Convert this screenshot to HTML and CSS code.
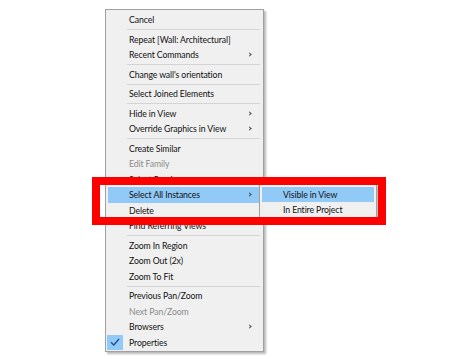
FILE: index.html
```html
<!DOCTYPE html>
<html lang="en">
<head>
  <meta charset="UTF-8">
  <title>Context menu</title>
  <link rel="stylesheet" href="styles.css">
</head>
<body>
  <div class="stage">
    <ul class="menu">
      <li class="item">Cancel</li>
      <li class="sep"></li>
      <li class="item">Repeat [Wall: Architectural]</li>
      <li class="item more">Recent Commands</li>
      <li class="sep"></li>
      <li class="item">Change wall's orientation</li>
      <li class="sep"></li>
      <li class="item">Select Joined Elements</li>
      <li class="sep"></li>
      <li class="item more">Hide in View</li>
      <li class="item more">Override Graphics in View</li>
      <li class="sep"></li>
      <li class="item">Create Similar</li>
      <li class="item off">Edit Family</li>
      <li class="item">Select Previous</li>
      <li class="item more hot">Select All Instances</li>
      <li class="item">Delete</li>
      <li class="item">Find Referring Views</li>
      <li class="sep"></li>
      <li class="item">Zoom In Region</li>
      <li class="item">Zoom Out (2x)</li>
      <li class="item">Zoom To Fit</li>
      <li class="sep"></li>
      <li class="item">Previous Pan/Zoom</li>
      <li class="item off">Next Pan/Zoom</li>
      <li class="item more">Browsers</li>
      <li class="item checked">
        <span class="check">
          <svg width="10" height="8" viewBox="0 0 10 8"><path d="M1 4.2 L3.8 7 L9 1" fill="none" stroke="#1f4f8f" stroke-width="1.3"/></svg>
        </span>
        Properties
      </li>
    </ul>

    <ul class="submenu">
      <li class="item hot">Visible in View</li>
      <li class="item">In Entire Project</li>
    </ul>

    <div class="callout"></div>
  </div>
</body>
</html>
```

FILE: styles.css
```css
*,*::before,*::after{
  margin: 0;
  padding: 0;
  box-sizing: border-box;
}
body{
  width: 474px;
  height: 359px;
  overflow: hidden;
  background: #fff;
  font-family: Lato, "Open Sans", sans-serif;
  font-size: 8.7px;
  letter-spacing: -0.1px;
  color: #111;
}
.stage{
  position: relative;
  width: 100%;
  height: 100%;
  padding: 9px 0 0 105px;
}
ul{
  list-style: none;
}

.menu{
  width: 159px;
  display: flex;
  flex-direction: column;
  padding: 2px 2px 1px 2px;
  background: #f0f0f0;
  border: 1px solid #a0a0a0;
  box-shadow: 2px 2px 2px rgba(0,0,0,.28);
}
.item{
  position: relative;
  height: 15.5px;
  line-height: 15.5px;
  padding-left: 21px;
  white-space: nowrap;
}
.item.more::after{
  content: "";
  position: absolute;
  right: 10px;
  top: 6px;
  width: 3px;
  height: 3px;
  border-top: 1px solid #444;
  border-right: 1px solid #444;
  transform: rotate(45deg);
}
.item.off{
  color: #8c8c8c;
}
.item.hot{
  background: #91c9f7;
}
.sep{
  height: 4px;
  margin-left: 19px;
  margin-right: 1px;
  display: flex;
  align-items: center;
}
.sep::before{
  content: "";
  width: 100%;
  height: 1px;
  background: #d4d4d4;
}
.check{
  position: absolute;
  left: -1px;
  top: 0;
  width: 16px;
  height: 15px;
  background: #91c9f7;
  display: flex;
  align-items: center;
  justify-content: center;
}

/* flyout */
.submenu{
  position: absolute;
  left: 259px;
  top: 184px;
  width: 118px;
  padding: 2px 2px 2px 2px;
  background: #f0f0f0;
  border: 1px solid #a0a0a0;
  box-shadow: 2px 2px 2px rgba(0,0,0,.28);
}
.submenu .item{
  height: 15px;
  line-height: 15px;
  padding-left: 21px;
}

/* red annotation box */
.callout{
  position: absolute;
  left: 92px;
  top: 177px;
  width: 294px;
  height: 48px;
  border: 8px solid #ff0000;
}
```
